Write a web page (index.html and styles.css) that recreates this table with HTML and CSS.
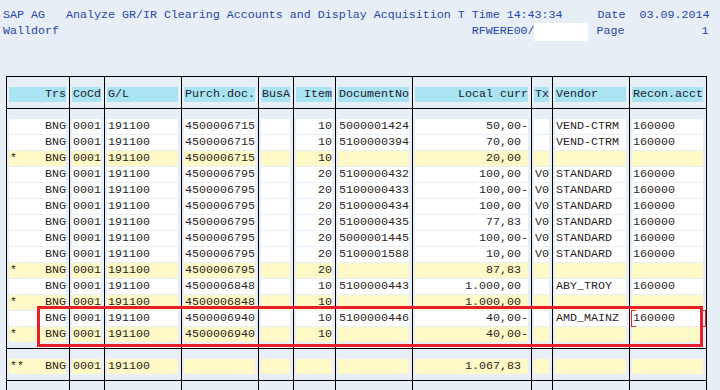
FILE: index.html
```html
<!DOCTYPE html>
<html>
<head>
<meta charset="utf-8">
<link rel="stylesheet" href="styles.css">
</head>
<body>
<div class="title">SAP AG   Analyze GR/IR Clearing Accounts and Display Acquisition T Time 14:43:34     Date  03.09.2014</div>
<div class="title">Walldorf                                                           RFWERE00/<span class="redact"></span> Page           1</div>
<div class="spacer"></div>
<div class="list">
  <div class="row ul top"><span class="c"></span><span class="c"></span><span class="c"></span><span class="c"></span><span class="c"></span><span class="c"></span><span class="c"></span><span class="c"></span><span class="c"></span><span class="c"></span><span class="c"></span></div>
  <div class="row head"><span class="c r">Trs</span><span class="c">CoCd</span><span class="c">G/L</span><span class="c">Purch.doc.</span><span class="c">BusA</span><span class="c r">Item</span><span class="c">DocumentNo</span><span class="c r">Local curr</span><span class="c">Tx</span><span class="c">Vendor</span><span class="c">Recon.acct</span></div>
  <div class="row ul"><span class="c"></span><span class="c"></span><span class="c"></span><span class="c"></span><span class="c"></span><span class="c"></span><span class="c"></span><span class="c"></span><span class="c"></span><span class="c"></span><span class="c"></span></div>

  <div class="row item"><span class="c r">BNG</span><span class="c">0001</span><span class="c">191100</span><span class="c">4500006715</span><span class="c"></span><span class="c r">10</span><span class="c">5000001424</span><span class="c r">50,00-</span><span class="c"></span><span class="c">VEND-CTRM</span><span class="c">160000</span></div>
  <div class="row item"><span class="c r">BNG</span><span class="c">0001</span><span class="c">191100</span><span class="c">4500006715</span><span class="c"></span><span class="c r">10</span><span class="c">5100000394</span><span class="c r">70,00 </span><span class="c"></span><span class="c">VEND-CTRM</span><span class="c">160000</span></div>
  <div class="row sub"><span class="c">*    BNG</span><span class="c">0001</span><span class="c">191100</span><span class="c">4500006715</span><span class="c"></span><span class="c r">10</span><span class="c"></span><span class="c r">20,00 </span><span class="c"></span><span class="c"></span><span class="c"></span></div>
  <div class="row item"><span class="c r">BNG</span><span class="c">0001</span><span class="c">191100</span><span class="c">4500006795</span><span class="c"></span><span class="c r">20</span><span class="c">5100000432</span><span class="c r">100,00 </span><span class="c">V0</span><span class="c">STANDARD</span><span class="c">160000</span></div>
  <div class="row item"><span class="c r">BNG</span><span class="c">0001</span><span class="c">191100</span><span class="c">4500006795</span><span class="c"></span><span class="c r">20</span><span class="c">5100000433</span><span class="c r">100,00-</span><span class="c">V0</span><span class="c">STANDARD</span><span class="c">160000</span></div>
  <div class="row item"><span class="c r">BNG</span><span class="c">0001</span><span class="c">191100</span><span class="c">4500006795</span><span class="c"></span><span class="c r">20</span><span class="c">5100000434</span><span class="c r">100,00 </span><span class="c">V0</span><span class="c">STANDARD</span><span class="c">160000</span></div>
  <div class="row item"><span class="c r">BNG</span><span class="c">0001</span><span class="c">191100</span><span class="c">4500006795</span><span class="c"></span><span class="c r">20</span><span class="c">5100000435</span><span class="c r">77,83 </span><span class="c">V0</span><span class="c">STANDARD</span><span class="c">160000</span></div>
  <div class="row item"><span class="c r">BNG</span><span class="c">0001</span><span class="c">191100</span><span class="c">4500006795</span><span class="c"></span><span class="c r">20</span><span class="c">5000001445</span><span class="c r">100,00-</span><span class="c">V0</span><span class="c">STANDARD</span><span class="c">160000</span></div>
  <div class="row item"><span class="c r">BNG</span><span class="c">0001</span><span class="c">191100</span><span class="c">4500006795</span><span class="c"></span><span class="c r">20</span><span class="c">5100001588</span><span class="c r">10,00 </span><span class="c">V0</span><span class="c">STANDARD</span><span class="c">160000</span></div>
  <div class="row sub"><span class="c">*    BNG</span><span class="c">0001</span><span class="c">191100</span><span class="c">4500006795</span><span class="c"></span><span class="c r">20</span><span class="c"></span><span class="c r">87,83 </span><span class="c"></span><span class="c"></span><span class="c"></span></div>
  <div class="row item"><span class="c r">BNG</span><span class="c">0001</span><span class="c">191100</span><span class="c">4500006848</span><span class="c"></span><span class="c r">10</span><span class="c">5100000443</span><span class="c r">1.000,00 </span><span class="c"></span><span class="c">ABY_TROY</span><span class="c">160000</span></div>
  <div class="row sub"><span class="c">*    BNG</span><span class="c">0001</span><span class="c">191100</span><span class="c">4500006848</span><span class="c"></span><span class="c r">10</span><span class="c"></span><span class="c r">1.000,00 </span><span class="c"></span><span class="c"></span><span class="c"></span></div>
  <div class="row item"><span class="c r">BNG</span><span class="c">0001</span><span class="c">191100</span><span class="c">4500006940</span><span class="c"></span><span class="c r">10</span><span class="c">5100000446</span><span class="c r">40,00-</span><span class="c"></span><span class="c">AMD_MAINZ</span><span class="c focus">160000<span class="cur-l"></span><span class="cur-r"></span></span></div>
  <div class="row sub"><span class="c">*    BNG</span><span class="c">0001</span><span class="c">191100</span><span class="c">4500006940</span><span class="c"></span><span class="c r">10</span><span class="c"></span><span class="c r">40,00-</span><span class="c"></span><span class="c"></span><span class="c"></span></div>

  <div class="row ul"><span class="c"></span><span class="c"></span><span class="c"></span><span class="c"></span><span class="c"></span><span class="c"></span><span class="c"></span><span class="c"></span><span class="c"></span><span class="c"></span><span class="c"></span></div>
  <div class="row sub"><span class="c">**   BNG</span><span class="c">0001</span><span class="c">191100</span><span class="c"></span><span class="c"></span><span class="c"></span><span class="c"></span><span class="c r">1.067,83 </span><span class="c"></span><span class="c"></span><span class="c"></span></div>
  <div class="row ul"><span class="c"></span><span class="c"></span><span class="c"></span><span class="c"></span><span class="c"></span><span class="c"></span><span class="c"></span><span class="c"></span><span class="c"></span><span class="c"></span><span class="c"></span></div>
</div>
<div class="mark"></div>
</body>
</html>
```

FILE: styles.css
```css
html, body {
  margin: 0;
}
body {
  position: relative;
  box-sizing: border-box;
  height: 390px;
  overflow: hidden;
  padding: 7px 0 0 3px;
  background: #e8eef6;
  font-family: "Liberation Mono", "Courier New", monospace;
  font-size: 11.67px;
  line-height: 16px;
  color: #2a1e1e;
}
.title {
  height: 16px;
  white-space: pre;
  color: #2747a3;
}
.redact {
  display: inline-block;
  vertical-align: top;
  width: 54px;
  height: 18px;
  margin: 0 2px -2px -1px;
  background: #ffffff;
}
.spacer {
  height: 32px;
}
.list {
  display: flex;
  flex-direction: column;
}
.row {
  --bg: transparent;
  display: grid;
  grid-template-columns: 63px 35px 77px 77px 35px 42px 77px 119px 21px 77px 77px;
  width: 707px;
  height: 16px;
  background: linear-gradient(#000, #000) 703px 0 / 1px 100% no-repeat;
}
.c {
  position: relative;
  padding-left: 7px;
  white-space: pre;
  line-height: 15px;
  background:
    linear-gradient(#000, #000) 3px 0 / 1px 100% no-repeat,
    linear-gradient(var(--bg), var(--bg)) 6px 0 / calc(100% - 6px) 15px no-repeat;
}
.r {
  text-align: right;
}
.head {
  --bg: #aae3f1;
  color: #1c2030;
}
.item {
  --bg: #ffffff;
}
.sub {
  --bg: #fef9c6;
}
.ul {
  background:
    linear-gradient(#000, #000) 3px 5px / 701px 1px no-repeat,
    linear-gradient(#000, #000) 703px 0 / 1px 100% no-repeat;
}
.ul.top {
  background:
    linear-gradient(#000, #000) 3px 5px / 701px 1px no-repeat,
    linear-gradient(#000, #000) 703px 5px / 1px 11px no-repeat;
}
.ul.top .c {
  background: linear-gradient(#000, #000) 3px 5px / 1px 11px no-repeat;
}
.cur-l,
.cur-r {
  position: absolute;
  top: -1px;
  width: 4px;
  height: 15px;
  border: 1px solid #e02a2a;
}
.cur-l {
  left: 5px;
  border-right: 0;
}
.cur-r {
  left: 75px;
  border-left: 0;
}
.mark {
  position: absolute;
  left: 37px;
  top: 306px;
  width: 666px;
  height: 41px;
  box-sizing: border-box;
  border: 3px solid #e5202a;
}
```
